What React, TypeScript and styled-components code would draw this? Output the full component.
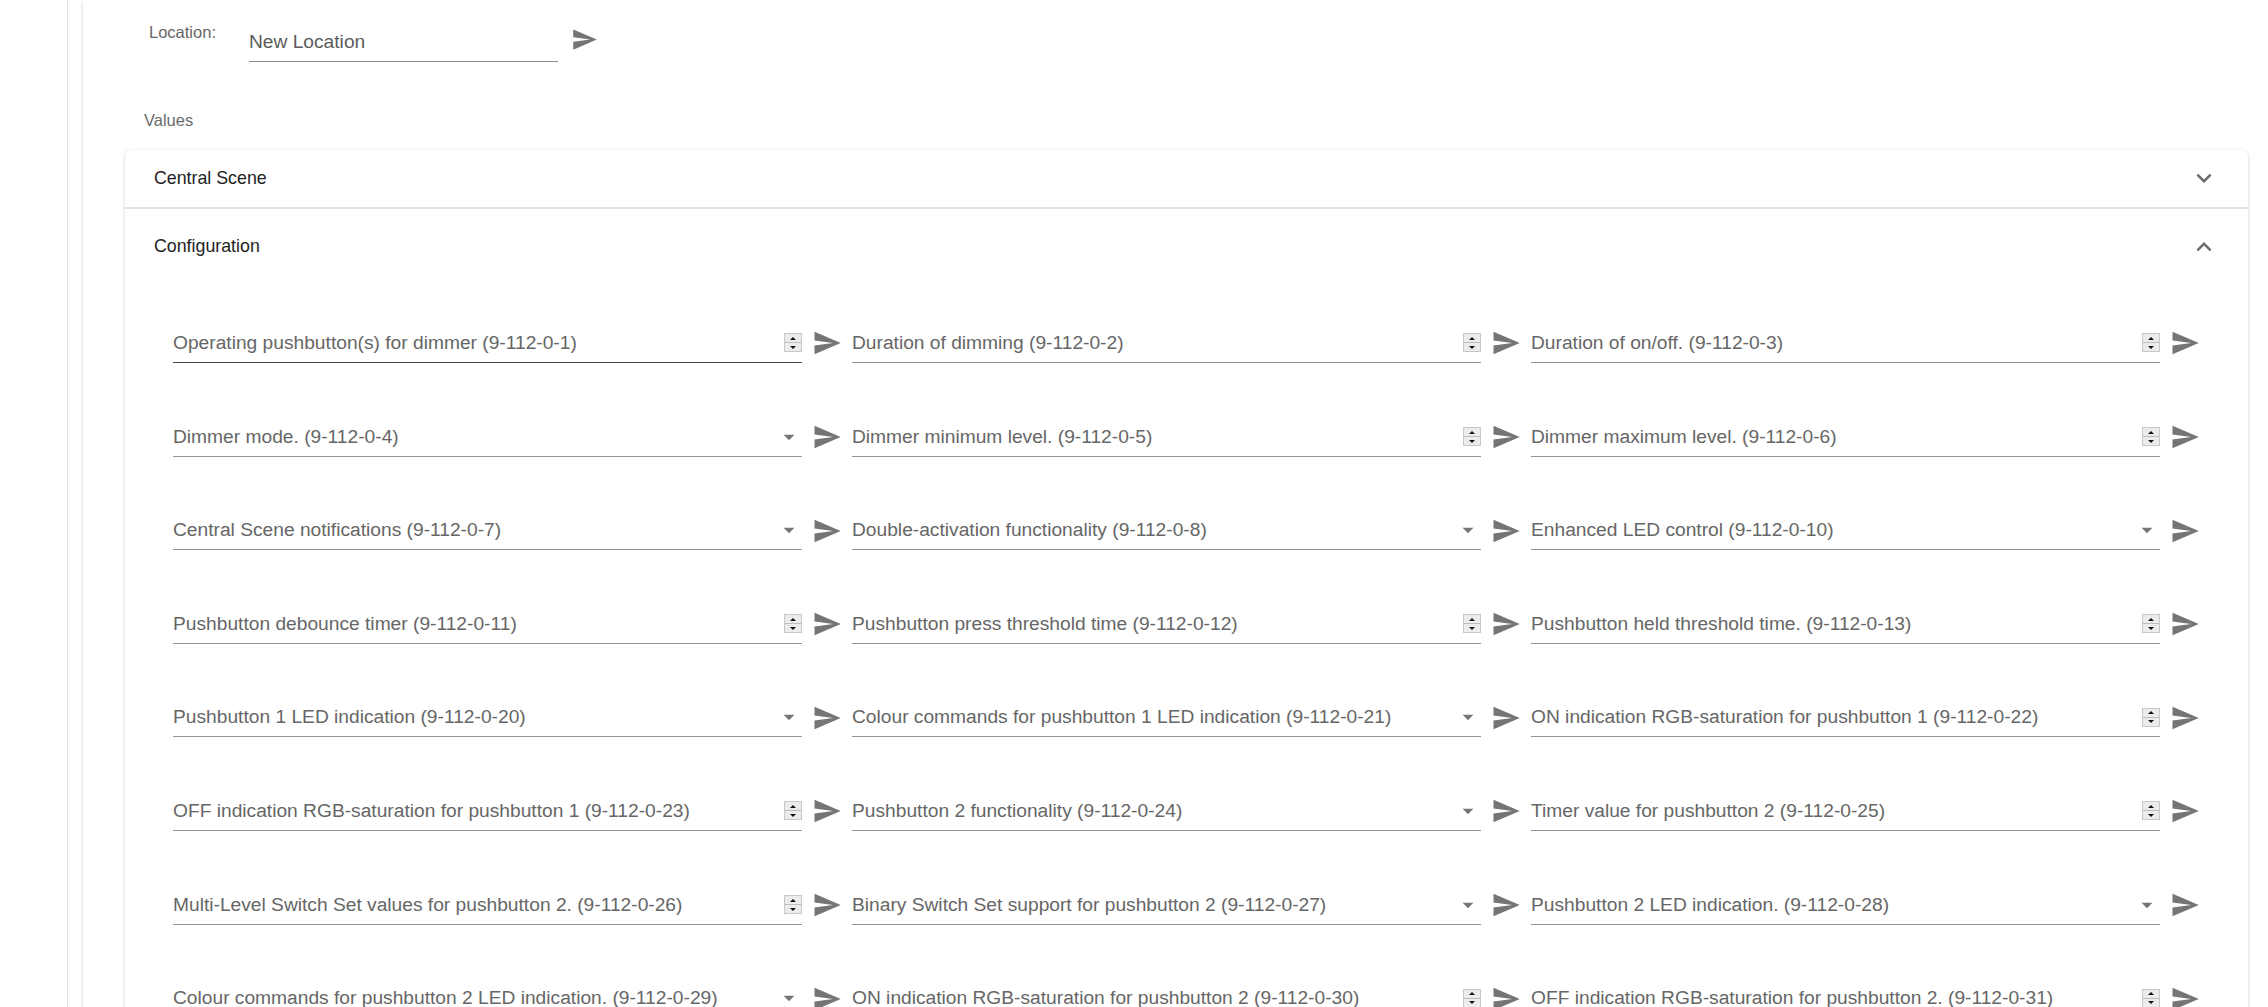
import React from 'react';
import styled, { createGlobalStyle } from 'styled-components';
import { MdSend, MdArrowDropDown, MdExpandMore, MdExpandLess } from 'react-icons/md';

type Kind = 'number' | 'select';

type Param = {
  label: string;
  kind: Kind;
};

const params: Param[] = [
  { label: 'Operating pushbutton(s) for dimmer (9-112-0-1)', kind: 'number' },
  { label: 'Duration of dimming (9-112-0-2)', kind: 'number' },
  { label: 'Duration of on/off. (9-112-0-3)', kind: 'number' },
  { label: 'Dimmer mode. (9-112-0-4)', kind: 'select' },
  { label: 'Dimmer minimum level. (9-112-0-5)', kind: 'number' },
  { label: 'Dimmer maximum level. (9-112-0-6)', kind: 'number' },
  { label: 'Central Scene notifications (9-112-0-7)', kind: 'select' },
  { label: 'Double-activation functionality (9-112-0-8)', kind: 'select' },
  { label: 'Enhanced LED control (9-112-0-10)', kind: 'select' },
  { label: 'Pushbutton debounce timer (9-112-0-11)', kind: 'number' },
  { label: 'Pushbutton press threshold time (9-112-0-12)', kind: 'number' },
  { label: 'Pushbutton held threshold time. (9-112-0-13)', kind: 'number' },
  { label: 'Pushbutton 1 LED indication (9-112-0-20)', kind: 'select' },
  { label: 'Colour commands for pushbutton 1 LED indication (9-112-0-21)', kind: 'select' },
  { label: 'ON indication RGB-saturation for pushbutton 1 (9-112-0-22)', kind: 'number' },
  { label: 'OFF indication RGB-saturation for pushbutton 1 (9-112-0-23)', kind: 'number' },
  { label: 'Pushbutton 2 functionality (9-112-0-24)', kind: 'select' },
  { label: 'Timer value for pushbutton 2 (9-112-0-25)', kind: 'number' },
  { label: 'Multi-Level Switch Set values for pushbutton 2. (9-112-0-26)', kind: 'number' },
  { label: 'Binary Switch Set support for pushbutton 2 (9-112-0-27)', kind: 'select' },
  { label: 'Pushbutton 2 LED indication. (9-112-0-28)', kind: 'select' },
  { label: 'Colour commands for pushbutton 2 LED indication. (9-112-0-29)', kind: 'select' },
  { label: 'ON indication RGB-saturation for pushbutton 2 (9-112-0-30)', kind: 'number' },
  { label: 'OFF indication RGB-saturation for pushbutton 2. (9-112-0-31)', kind: 'number' },
];

const GlobalStyle = createGlobalStyle`
  html, body {
    margin: 0;
    padding: 0;
    overflow: hidden;
    background: #fff;
  }
  body {
    font-family: 'Liberation Sans', Arial, sans-serif;
  }
`;

const App = () => {
  return (
    <>
      <GlobalStyle />
      <Page>
        <Sidebar />
        <Card>
          <LocationRow>
            <LocationLabel>Location:</LocationLabel>
            <Field $width='309px' $tone='#8a8a8a'>
              <FieldText $color='#5c5c5c'>New Location</FieldText>
            </Field>
            <SendButton $size='27px' $gap='12.7px' $top='3px'>
              <MdSend size={27} />
            </SendButton>
          </LocationRow>

          <SectionLabel>Values</SectionLabel>

          <Accordion>
            <Summary $height='57px'>
              <span>Central Scene</span>
              <MdExpandMore size={30} color='#6b6b6b' />
            </Summary>
            <Divider />
            <Summary $height='76px'>
              <span>Configuration</span>
              <MdExpandLess size={30} color='#6b6b6b' />
            </Summary>
            <Details>
              <ParamGrid>
                {params.map((p, i) => (
                  <Cell key={p.label}>
                    <Field $width='628.7px' $tone={i === 0 ? '#4a4a4a' : '#949494'}>
                      <FieldText>{p.label}</FieldText>
                      {p.kind === 'number' ? (
                        <Spinner>
                          <SpinHalf />
                          <SpinHalf $down />
                        </Spinner>
                      ) : (
                        <DropArrow>
                          <MdArrowDropDown size={26} />
                        </DropArrow>
                      )}
                    </Field>
                    <SendButton $size='30px' $gap='10.8px'>
                      <MdSend size={30} />
                    </SendButton>
                  </Cell>
                ))}
              </ParamGrid>
            </Details>
          </Accordion>
        </Card>
      </Page>
    </>
  );
};

const Page = styled.div`
  display: flex;
  height: 1007px;
  overflow: hidden;
`;

const Sidebar = styled.div`
  width: 67px;
  flex-shrink: 0;
  border-right: 1px solid #e0e0e0;
`;

const Card = styled.div`
  margin-left: 15px;
  width: 2207px;
  flex-shrink: 0;
  box-sizing: border-box;
  padding: 0 42px;
  background: #fff;
  box-shadow: 0 3px 1.5px -1.5px rgba(0, 0, 0, 0.2),
    0 1.5px 1.5px 0 rgba(0, 0, 0, 0.14), 0 1.5px 4.5px 0 rgba(0, 0, 0, 0.12);
`;

const LocationRow = styled.div`
  display: flex;
  align-items: flex-start;
  padding: 23.3px 0 0 24px;
`;

const LocationLabel = styled.div`
  font-size: 16.5px;
  line-height: 19px;
  color: #666;
  margin-right: 33px;
`;

const SectionLabel = styled.div`
  margin-top: 49px;
  padding-left: 19px;
  font-size: 16.5px;
  line-height: 19px;
  color: #6a6a6a;
`;

const Accordion = styled.div`
  margin-top: 19.4px;
  background: #fff;
  border-radius: 6px 6px 0 0;
  box-shadow: 0 3px 1.5px -1.5px rgba(0, 0, 0, 0.2),
    0 1.5px 1.5px 0 rgba(0, 0, 0, 0.14), 0 1.5px 4.5px 0 rgba(0, 0, 0, 0.12);
`;

const Summary = styled.div<{ $height: string }>`
  height: ${({ $height }) => $height};
  display: flex;
  align-items: center;
  justify-content: space-between;
  padding: 0 29px;
  font-size: 17.8px;
  color: #1e1e1e;

  svg {
    display: block;
  }
`;

const Divider = styled.div`
  height: 2px;
  background: #e2e2e2;
`;

const Details = styled.div`
  padding: 39.3px 0 0 48px;
`;

const ParamGrid = styled.div`
  display: grid;
  grid-template-columns: repeat(3, 679px);
  row-gap: 54.6px;
`;

const Cell = styled.div`
  display: flex;
  align-items: center;
`;

const Field = styled.div<{ $width: string; $tone: string }>`
  width: ${({ $width }) => $width};
  flex-shrink: 0;
  height: 38px;
  display: flex;
  align-items: center;
  border-bottom: 1px solid ${({ $tone }) => $tone};
`;

const FieldText = styled.span<{ $color?: string }>`
  flex: 1;
  min-width: 0;
  white-space: nowrap;
  overflow: hidden;
  font-size: 19.2px;
  color: ${({ $color }) => $color || '#666'};
`;

const Spinner = styled.span`
  display: flex;
  flex-direction: column;
  width: 18px;
  height: 19px;
  box-sizing: border-box;
  border: 1px solid #c8c8c8;
  background: #ececec;
  flex-shrink: 0;
`;

const SpinHalf = styled.span<{ $down?: boolean }>`
  flex: 1;
  display: flex;
  align-items: center;
  justify-content: center;

  & + & {
    border-top: 1px solid #bdbdbd;
  }

  &::after {
    content: '';
    border-left: 3px solid transparent;
    border-right: 3px solid transparent;
    ${({ $down }) =>
      $down ? 'border-top: 3px solid #111;' : 'border-bottom: 3px solid #111;'}
  }
`;

const DropArrow = styled.span`
  display: flex;
  color: #757575;
  flex-shrink: 0;
  margin-right: -0.4px;
`;

const SendButton = styled.span<{ $size: string; $gap: string; $top?: string }>`
  display: flex;
  width: ${({ $size }) => $size};
  height: ${({ $size }) => $size};
  margin-left: ${({ $gap }) => $gap};
  margin-top: ${({ $top }) => $top || '0'};
  color: #757575;
  flex-shrink: 0;
`;

export default App;
